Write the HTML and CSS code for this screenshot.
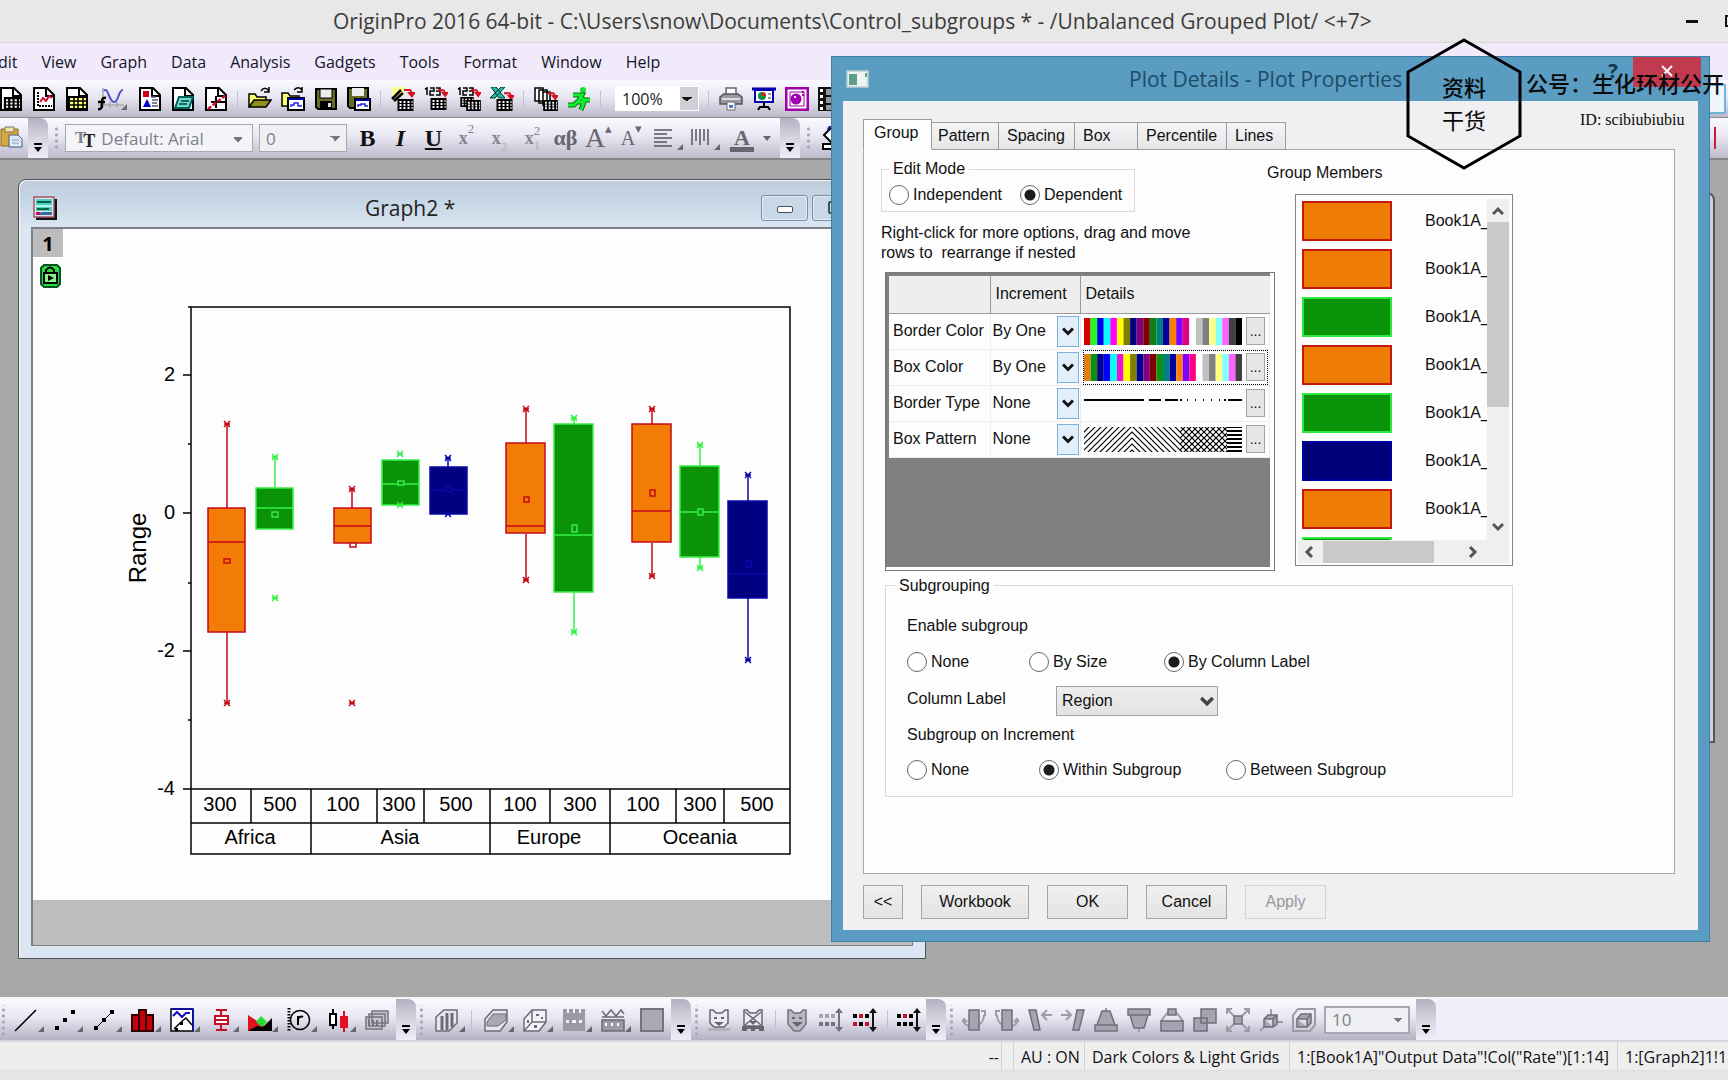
FILE: index.html
```
<!DOCTYPE html>
<html lang="en">
<head>
    <meta charset="UTF-8">
    <meta name="viewport" content="width=device-width, initial-scale=1.0">
    <title>OriginPro 2016 64-bit</title>
    <link rel="stylesheet" href="styles.css">
</head>
<body>
    <!-- icon set -->
    <svg class="sprite" aria-hidden="true">
        <symbol id="doc" viewBox="0 0 24 24"><path d="M2 1h13l7 7v15H2z" fill="#fff" stroke="#000" stroke-width="2"/><path d="M14 1v8h8" fill="none" stroke="#000" stroke-width="2"/></symbol>
        <symbol id="grid" viewBox="0 0 16 12"><path d="M0 0h16v12H0z" fill="#000"/><path d="M2 2h2v2H2zM6 2h2v2H6zM10 2h2v2h-2zM14 2h1v2h-1zM2 5h2v2H2zM6 5h2v2H6zM10 5h2v2h-2zM14 5h1v2h-1zM2 8h2v2H2zM6 8h2v2H6zM10 8h2v2h-2zM14 8h1v2h-1z" fill="#fff"/></symbol>
        <symbol id="i-book" viewBox="0 0 24 24"><use href="#doc"/><use href="#grid" x="4" y="10" width="19" height="13"/></symbol>
        <symbol id="i-graph" viewBox="0 0 24 24"><use href="#doc"/><path d="M6 5v14h14" fill="none" stroke="#000" stroke-width="2" stroke-dasharray="2 1"/><path d="M8 15l3-4 3 3 3-5 3 2" fill="none" stroke="#d01030" stroke-width="2"/></symbol>
        <symbol id="i-matrix" viewBox="0 0 24 24"><use href="#doc"/><path d="M4 10h18v12H4z" fill="#ffff70" stroke="#000" stroke-width="2"/><path d="M4 14h18M4 18h18M9 10v12M13 10v12M18 10v12" stroke="#000" stroke-width="1.5"/></symbol>
        <symbol id="i-func" viewBox="0 0 30 24"><path d="M5 1v20M0 18h26M12 15v6M19 15v6" stroke="#aaa" stroke-width="1.5" fill="none"/><path d="M6 4c4-5 5 11 10 11s4-12 9-12" fill="none" stroke="#5050d0" stroke-width="2"/><path d="M8 11c-4-1-4 2-4 5s0 7-4 6M0 15h7" fill="none" stroke="#000" stroke-width="2.5"/><path d="M29 17v6h-6z" fill="#667"/></symbol>
        <symbol id="i-layout" viewBox="0 0 24 24"><use href="#doc"/><path d="M5 4h6v6H5z" fill="#d00010"/><path d="M5 20l4-8 4 8z" fill="#0000d0"/><path d="M14 13h6M14 16h5M14 19h6M13 10h5" stroke="#557" stroke-width="1.5"/></symbol>
        <symbol id="i-notes" viewBox="0 0 24 24"><use href="#doc"/><path d="M8 10h14l-4 11H4z" fill="#6fe0c8" stroke="#006060" stroke-width="2"/><path d="M10 14h8M8 17h8" stroke="#004040" stroke-width="1.5"/></symbol>
        <symbol id="i-fit" viewBox="0 0 24 24"><use href="#doc"/><path d="M12 9v12M7 15h14" stroke="#000" stroke-width="2"/><path d="M4 22L22 8" stroke="#d01030" stroke-width="2.5" stroke-dasharray="4 2"/></symbol>
        <symbol id="i-open" viewBox="0 0 24 24"><path d="M1 19V7h6l2 3h9v9z" fill="#ffff70" stroke="#000" stroke-width="1.5"/><path d="M1 20l5-7h17l-5 7z" fill="#909020" stroke="#000" stroke-width="1.5"/><path d="M13 4c3-4 6-3 8 0M21 0v5h-5" fill="none" stroke="#000" stroke-width="1.5"/></symbol>
        <symbol id="i-opent" viewBox="0 0 24 24"><path d="M1 19V6h6l2 3h9v10z" fill="#ffff70" stroke="#000" stroke-width="1.5"/><path d="M13 3c3-3 6-3 8 0M21 0v5h-5" fill="none" stroke="#000" stroke-width="1.5"/><path d="M7 11h16v12H7z" fill="#fff" stroke="#000" stroke-width="2"/><path d="M7 12h16" stroke="#0000a0" stroke-width="2"/><path d="M10 20v-2h3v-2h4v3h4" fill="none" stroke="#2020f0" stroke-width="1.5"/></symbol>
        <symbol id="i-save" viewBox="0 0 24 24"><path d="M2 2h20v20H4l-2-2z" fill="#6b6b28" stroke="#000" stroke-width="2"/><path d="M6 2h12v9H6z" fill="#eee" stroke="#000"/><path d="M6 14h12v8H6z" fill="#000"/><path d="M14 16h3v4h-3z" fill="#ddd"/></symbol>
        <symbol id="i-savet" viewBox="0 0 24 24"><path d="M1 1h20v20H3l-2-2z" fill="#6b6b28" stroke="#000" stroke-width="2"/><path d="M5 1h12v8H5z" fill="#eee"/><path d="M8 12h15v11H8z" fill="#fff" stroke="#000" stroke-width="2"/><path d="M8 13h15" stroke="#0000a0" stroke-width="2"/><path d="M11 20v-2h3v-1h4v2h3" fill="none" stroke="#2020f0" stroke-width="1.5"/></symbol>
        <symbol id="arrow-in" viewBox="0 0 12 10"><path d="M0 2h6l2 3" fill="none" stroke="#d81020" stroke-width="2"/><path d="M3 4h9L8 10z" fill="#d81020"/></symbol>
        <symbol id="i-wiz" viewBox="0 0 24 24"><path d="M1 0h12v9H1z" fill="#ffff90"/><path d="M1 12L10 3M3 14l9-8" stroke="#000" stroke-width="2.5"/><use href="#arrow-in" x="13" y="1" width="12" height="10"/><use href="#grid" x="5" y="12" width="19" height="12"/></symbol>
        <symbol id="i-imp1" viewBox="0 0 24 24"><path d="M1 2l2-1v7M6 1h4v3H6v4h4M12 1h4v7h-4M12 4h4" fill="none" stroke="#000" stroke-width="1.5"/><use href="#arrow-in" x="14" y="1" width="11" height="10"/><use href="#grid" x="5" y="11" width="19" height="12"/></symbol>
        <symbol id="i-impn" viewBox="0 0 24 24"><path d="M1 2l2-1v7M6 1h4v3H6v4h4M12 1h4v7h-4M12 4h4" fill="none" stroke="#000" stroke-width="1.5"/><use href="#arrow-in" x="14" y="1" width="11" height="10"/><use href="#grid" x="2" y="10" width="16" height="10"/><use href="#grid" x="9" y="13" width="15" height="11"/></symbol>
        <symbol id="i-xls" viewBox="0 0 24 24"><path d="M1 0h5l9 11H9zM11 0h4L5 11H0z" fill="#20b8a8" stroke="#003838"/><use href="#arrow-in" x="14" y="4" width="11" height="10"/><use href="#grid" x="5" y="12" width="19" height="12"/></symbol>
        <symbol id="i-batch" viewBox="0 0 24 24"><path d="M1 1h8v13H1zM5 3h8v13H5zM9 5h7v13H9z" fill="#fff" stroke="#000" stroke-width="1.5"/><use href="#arrow-in" x="14" y="4" width="11" height="10"/><use href="#grid" x="9" y="13" width="15" height="11"/></symbol>
        <symbol id="i-run" viewBox="0 0 24 24"><circle cx="16" cy="3" r="3" fill="#10e030"/><path d="M6 8h9l-4 7h6l-3 8M11 14l-4 4H1M13 9l4 4h6" fill="none" stroke="#087018" stroke-width="5"/><path d="M6 8h9l-4 7h6l-3 8M11 14l-4 4H1M13 9l4 4h6" fill="none" stroke="#10ee30" stroke-width="3"/></symbol>
        <symbol id="i-print" viewBox="0 0 24 24"><path d="M7 9V1h10v8" fill="#fff" stroke="#667" stroke-width="1.5"/><path d="M1 10l4-3h14l4 3v7H1z" fill="#999aa4" stroke="#555" stroke-width="1.5"/><path d="M3 12h18" stroke="#ddd" stroke-width="2"/><path d="M8 15h8v8H8z" fill="#fff" stroke="#667"/><path d="M10 18h4v3h-4z" fill="#4080c0"/></symbol>
        <symbol id="i-slide" viewBox="0 0 24 24"><path d="M0 2h24" stroke="#0000b0" stroke-width="3"/><path d="M3 3h18v12H3z" fill="#fff" stroke="#0000b0" stroke-width="2"/><circle cx="10" cy="9" r="4" fill="#109040"/><path d="M10 9V5a4 4 0 014 4z" fill="#e02020"/><path d="M16 7h3M16 11h3" stroke="#333"/><path d="M12 15v5M6 23l2-3h8l2 3" stroke="#000" stroke-width="2" fill="none"/></symbol>
        <symbol id="i-cam" viewBox="0 0 24 24"><path d="M1 1h22v22H1z" fill="#fff" stroke="#a000a8" stroke-width="3"/><path d="M5 5h14v14H5z" fill="none" stroke="#a000a8"/><circle cx="11" cy="12" r="5.500" fill="#a000b0"/><path d="M9 9h2v2H9z" fill="#fff"/><path d="M18 4v6" stroke="#a000a8" stroke-width="2" stroke-dasharray="2 1"/></symbol>
        <symbol id="i-film" viewBox="0 0 24 24"><path d="M0 0h24v24H0z" fill="#111"/><path d="M2 2h3v3H2zM2 8h3v3H2zM2 14h3v3H2zM2 20h3v3H2z" fill="#fff"/><path d="M8 2h14v6H8zM8 10h14v6H8zM8 18h14v5H8z" fill="#999"/></symbol>
        <symbol id="i-paste" viewBox="0 0 24 24"><path d="M1 3h17v17H1z" fill="#d9a93c" stroke="#8a6a20"/><path d="M5 1h9v5H5z" fill="#f3e6a0" stroke="#777"/><path d="M9 9h9l4 4v8H9z" fill="#dfeaf6" stroke="#445a80"/><path d="M12 14h7M12 17h7" stroke="#7f9cc8"/></symbol>
        <symbol id="i-align" viewBox="0 0 24 24"><path d="M1 4h18M1 8h13M1 12h18M1 16h13M1 20h18" stroke="#555560" stroke-width="1.500"/></symbol>
        <symbol id="i-bars" viewBox="0 0 24 24"><path d="M2 3v16M6 3v12M10 3v16M14 3v12M18 3v16" stroke="#555560" stroke-width="1.500"/></symbol>
        <symbol id="i-fill" viewBox="0 0 24 24"><path d="M2 9l7-7 7 7-7 7z" fill="#fff" stroke="#000" stroke-width="2"/><path d="M6 5c0-6 6-6 6-1v4" fill="none" stroke="#202080" stroke-width="2"/><path d="M1 18h22v5H1z" fill="#fff" stroke="#000" stroke-width="2"/></symbol>
        <symbol id="i-line" viewBox="0 0 24 24"><path d="M1 23L22 2" stroke="#000" stroke-width="1.500"/></symbol>
        <symbol id="i-dots" viewBox="0 0 24 24"><path d="M2 18h4v4H2zM10 10h4v4h-4zM18 2h4v4h-4z"/></symbol>
        <symbol id="i-ldots" viewBox="0 0 24 24"><path d="M4 20L20 4" stroke="#000"/><path d="M2 18h4v4H2zM10 10h4v4h-4zM18 2h4v4h-4z"/></symbol>
        <symbol id="i-col" viewBox="0 0 24 24"><path d="M1 7h7v16H1zM8 2h7v21H8zM15 7h7v16h-7z" fill="#c40010" stroke="#300" stroke-width="2"/></symbol>
        <symbol id="i-multi" viewBox="0 0 24 24"><path d="M1 1h22v22H1z" fill="#fff" stroke="#000" stroke-width="1.500"/><path d="M3 8l4-4 5 5 4-4h4" fill="none" stroke="#1010c0" stroke-width="2"/><path d="M4 21l6-6 6-5 6 7" fill="none" stroke="#000" stroke-width="1.500"/><path d="M5 20h3v3H5zM10 14h3v3h-3z"/><path d="M23 1v22M1 1h22" stroke="#1010a0" stroke-width="2"/></symbol>
        <symbol id="i-box" viewBox="0 0 24 24"><path d="M7 2h11M12 2v21M7 22h11" stroke="#c41020" stroke-width="2"/><path d="M6 8h13v8H6z" fill="#fff" stroke="#c41020" stroke-width="2"/><path d="M6 12h13" stroke="#c41020" stroke-width="2"/></symbol>
        <symbol id="i-area" viewBox="0 0 24 24"><path d="M0 7l24 16H0z" fill="#e01020"/><path d="M8 14l5-6 6 6-5 5z" fill="#20e030"/><path d="M0 23l9-5 6 1 9-9v13z"/></symbol>
        <symbol id="i-polar" viewBox="0 0 24 24"><path d="M2 0v23" stroke="#000" stroke-width="3" stroke-dasharray="1.500 1.500"/><circle cx="13" cy="12" r="9.500" fill="none" stroke="#000" stroke-width="1.500"/><path d="M11 17V8M11 11c1-2 3-3 5-2" fill="none" stroke="#000" stroke-width="2"/></symbol>
        <symbol id="i-stock" viewBox="0 0 24 24"><path d="M7 1v20" stroke="#000" stroke-width="2"/><path d="M4 6h6v11H4z" fill="#fff" stroke="#000" stroke-width="2"/><path d="M18 3v21" stroke="#d01020" stroke-width="2"/><path d="M14 8h8v12h-8z" fill="#e01020"/></symbol>
        <symbol id="i-stack" viewBox="0 0 24 24"><path d="M7 3h16v12H7zM4 6h16v12H4zM1 9h16v12H1z" fill="#c6c6d0" stroke="#74747f" stroke-width="1.500"/><path d="M4 12v6M8 12v6M12 12v6" stroke="#74747f" stroke-width="2"/></symbol>
        <symbol id="i-3dbar" viewBox="0 0 24 24"><path d="M1 23V9l8-7h13v13l-8 8z" fill="#e6e6ee" stroke="#6c6c78" stroke-width="1.500"/><path d="M7 8v14M12 5v17M17 5v14" stroke="#6c6c78" stroke-width="3"/></symbol>
        <symbol id="i-3dsurf" viewBox="0 0 24 24"><path d="M1 23V11l8-9h14v12l-7 9z" fill="#e6e6ee" stroke="#6c6c78" stroke-width="1.500"/><path d="M3 14l6-8h13v6l-8 6H3z" fill="#a9a9b6" stroke="#6c6c78"/></symbol>
        <symbol id="i-3dsc" viewBox="0 0 24 24"><path d="M1 23V11l8-9h14v12l-7 9zM9 2v12l-8 9M9 14h14" fill="#f2f2f8" stroke="#6c6c78" stroke-width="1.500"/><path d="M4 12h2v3H4zM13 6h3v2h-3zM18 9h2v2h-2zM11 17h3v3h-3z" fill="#6c6c78"/></symbol>
        <symbol id="i-heat" viewBox="0 0 24 24"><path d="M1 1h22v22H1z" fill="#9a9aa6"/><path d="M5 1h2v4H5zM11 1h2v4h-2zM17 1h2v4h-2zM4 12h3v3H4zM10 12h4v3h-4zM17 12h3v3h-3z" fill="#f4f4fa"/></symbol>
        <symbol id="i-wave" viewBox="0 0 24 24"><path d="M1 3l4 5 5-6 5 6 5-6 3 4M1 9h22" fill="none" stroke="#6c6c78" stroke-width="1.500"/><path d="M1 12h22v11H1z" fill="#9a9aa6" stroke="#6c6c78" stroke-width="1.500"/><path d="M4 15h2v3H4zM10 15h2v3h-2zM16 15h2v3h-2z" fill="#fff"/></symbol>
        <symbol id="i-img" viewBox="0 0 24 24"><path d="M1 1h22v22H1z" fill="#abaab3" stroke="#74747f" stroke-width="2"/></symbol>
        <symbol id="i-mask" viewBox="0 0 24 24"><path d="M1 20h22v3H1z" fill="#b2b2be"/><path d="M3 2h3l3 3h6l3-3h3v13l-4 4H7l-4-4z" fill="#ececf3" stroke="#666672" stroke-width="1.500"/><path d="M7 9h3v2H7zM14 9h3v2h-3zM7 14h10l-5 4z" fill="#666672"/></symbol>
        <symbol id="i-unmask" viewBox="0 0 24 24"><path d="M3 2h3l3 3h6l3-3h3v16H3z" fill="#ececf3" stroke="#666672" stroke-width="1.500"/><path d="M4 4l16 13M20 4L4 17" stroke="#666672" stroke-width="1.500"/><path d="M8 13h8l-4 4zM1 18h22v3H1zM1 21h5v2H1zM10 21h4v2h-4zM18 21h5v2h-5z" fill="#666672"/></symbol>
        <symbol id="i-mask2" viewBox="0 0 24 24"><path d="M3 2h3l3 3h6l3-3h3v14l-6 7H9l-6-7z" fill="#b8b8c4" stroke="#74747f" stroke-width="1.500"/><path d="M7 9h3v2H7zM14 9h3v2h-3zM7 14h11l-6 5z" fill="#666672"/></symbol>
        <symbol id="updown" viewBox="0 0 8 24"><path d="M4 3v18" stroke="currentColor" stroke-width="2"/><path d="M4 0l4 5H0zM4 24l4-5H0z" fill="currentColor"/></symbol>
        <symbol id="i-sw1" viewBox="0 0 24 24"><path d="M0 6h4v4H0zM6 6h4v4H6zM12 6h4v4h-4z" fill="#a5a5b0"/><path d="M0 14h4v4H0zM6 14h4v4H6zM12 14h4v4h-4z" fill="#72727e"/><use href="#updown" x="16" width="8" height="24" color="#72727e"/></symbol>
        <symbol id="i-sw2" viewBox="0 0 24 24"><path d="M0 6h4v4H0zM12 6h4v4h-4zM6 14h4v4H6z"/><path d="M6 6h4v4H6zM0 14h4v4H0zM12 14h4v4h-4z" fill="#c8102e"/><use href="#updown" x="16" width="8" height="24"/></symbol>
        <symbol id="i-sw3" viewBox="0 0 24 24"><path d="M0 6h4v4H0zM12 6h4v4h-4zM0 14h4v4H0zM6 14h4v4H6zM12 14h4v4h-4z"/><path d="M6 6h4v4H6z" fill="#c8102e"/><use href="#updown" x="16" width="8" height="24"/></symbol>
        <symbol id="i-rotl" viewBox="0 0 24 24"><path d="M2 13c0 8 20 8 20-6M0 14l2-3 3 3M19 3h4v5" class="l"/><path d="M7 2h10v20H7z" class="g"/></symbol>
        <symbol id="i-rotr" viewBox="0 0 24 24"><path d="M22 13c0 8-20 8-20-6M24 14l-2-3-3 3M5 3H1v5" class="l"/><path d="M7 2h10v20H7z" class="g"/></symbol>
        <symbol id="i-tiltl" viewBox="0 0 24 24"><path d="M1 2h7l4 20H6z" class="g"/><path d="M24 7h-9M19 2l-5 5 5 5" class="l"/></symbol>
        <symbol id="i-tiltr" viewBox="0 0 24 24"><path d="M23 2h-7l-4 20h6z" class="g"/><path d="M0 7h9M5 2l5 5-5 5" class="l"/></symbol>
        <symbol id="i-trap" viewBox="0 0 24 24"><path d="M12 0v4" class="l"/><path d="M8 3h8l5 14H3zM1 17h22v6H1z" class="g"/></symbol>
        <symbol id="i-trapd" viewBox="0 0 24 24"><path d="M12 24v-4" class="l"/><path d="M3 7h18l-4 13H7zM1 1h22v6H1z" class="g"/></symbol>
        <symbol id="i-persp" viewBox="0 0 24 24"><path d="M1 13L8 4M23 13l-7-9" class="l"/><path d="M8 1h8v6H8zM1 13h22v10H1z" class="g"/></symbol>
        <symbol id="i-two" viewBox="0 0 24 24"><path d="M8 1h15v14H8zM1 10h13v13H1z" class="g"/></symbol>
        <symbol id="i-fitall" viewBox="0 0 24 24"><path d="M1 1l7 7M23 1l-7 7M1 23l7-7M23 23l-7-7M1 6V1h5M18 1h5v5M1 18v5h5M18 23h5v-5" class="l"/><path d="M8 8h8v8H8z" class="g"/></symbol>
        <symbol id="i-axes" viewBox="0 0 24 24"><path d="M12 7V1M5 19l-4 4M18 14h6" class="l"/><path d="M5 11l4-4h9v9l-4 3H5zM14 19v-8H5M14 11l4-4" class="g"/></symbol>
        <symbol id="i-cube" viewBox="0 0 24 24"><path d="M1 23V7l5-6h17v16l-5 6z" class="l"/><path d="M5 11l4-5h10v9l-4 4H5zM15 19v-8H5M15 11l4-5" class="g"/></symbol>
        <symbol id="chev" viewBox="0 0 12 10"><path d="M1 2l5 5 5-5" fill="none" stroke="currentColor" stroke-width="3"/></symbol>
        <symbol id="mark" viewBox="-4 -4 8 8"><path d="M-3-3l6 6M3-3l-6 6M-3 0h6" fill="none" stroke="currentColor" stroke-width="1.500"/></symbol>
    </svg>

    <header class="titlebar">
        <h1>OriginPro 2016 64-bit - C:\Users\snow\Documents\Control_subgroups * - /Unbalanced Grouped Plot/ &lt;+7&gt;</h1>
        <div class="titlebar__buttons">
            <button class="win-btn" aria-label="Minimize"><span class="win-btn__min"></span></button>
            <button class="win-btn" aria-label="Maximize"><span class="win-btn__max"></span></button>
        </div>
    </header>

    <nav class="menubar">
        <a href="#">Edit</a><a href="#">View</a><a href="#">Graph</a><a href="#">Data</a><a href="#">Analysis</a><a href="#">Gadgets</a><a href="#">Tools</a><a href="#">Format</a><a href="#">Window</a><a href="#">Help</a>
    </nav>

    <div class="toolbar toolbar--standard">
        <button class="tool" aria-label="New workbook"><svg><use href="#i-book"/></svg></button>
        <button class="tool" aria-label="New graph"><svg><use href="#i-graph"/></svg></button>
        <button class="tool" aria-label="New matrix"><svg><use href="#i-matrix"/></svg></button>
        <button class="tool tool--wide" aria-label="New function"><svg><use href="#i-func"/></svg></button>
        <button class="tool" aria-label="New layout"><svg><use href="#i-layout"/></svg></button>
        <button class="tool" aria-label="New notes"><svg><use href="#i-notes"/></svg></button>
        <button class="tool" aria-label="Digitizer"><svg><use href="#i-fit"/></svg></button>
        <span class="sep"></span>
        <button class="tool" aria-label="Open"><svg><use href="#i-open"/></svg></button>
        <button class="tool" aria-label="Open template"><svg><use href="#i-opent"/></svg></button>
        <button class="tool" aria-label="Save"><svg><use href="#i-save"/></svg></button>
        <button class="tool" aria-label="Save template"><svg><use href="#i-savet"/></svg></button>
        <span class="sep"></span>
        <button class="tool" aria-label="Import wizard"><svg><use href="#i-wiz"/></svg></button>
        <button class="tool" aria-label="Import ASCII"><svg><use href="#i-imp1"/></svg></button>
        <button class="tool" aria-label="Import multiple ASCII"><svg><use href="#i-impn"/></svg></button>
        <button class="tool" aria-label="Import Excel"><svg><use href="#i-xls"/></svg></button>
        <span class="sep"></span>
        <button class="tool" aria-label="Batch"><svg><use href="#i-batch"/></svg></button>
        <button class="tool" aria-label="Recalculate"><svg><use href="#i-run"/></svg></button>
        <span class="sep"></span>
        <select class="combo combo--zoom" aria-label="Zoom"><option>100%</option></select>
        <span class="sep"></span>
        <button class="tool" aria-label="Print"><svg><use href="#i-print"/></svg></button>
        <button class="tool" aria-label="Slide show"><svg><use href="#i-slide"/></svg></button>
        <button class="tool" aria-label="Snapshot"><svg><use href="#i-cam"/></svg></button>
        <button class="tool" aria-label="Video"><svg><use href="#i-film"/></svg></button>
        <span class="tool-end"></span>
    </div>

    <div class="toolbar toolbar--format">
        <button class="tool tool--paste" aria-label="Paste"><svg><use href="#i-paste"/></svg></button>
        <span class="overflow"></span>
        <span class="grip"></span>
        <label class="font-box"><span class="font-box__t1">T</span><span class="font-box__t2">T</span>
            <select class="combo combo--font" aria-label="Font"><option>Default: Arial</option></select></label>
        <select class="combo combo--size" aria-label="Font size"><option>0</option></select>
        <button class="tool tool--text"><b>B</b></button>
        <button class="tool tool--text"><b><i>I</i></b></button>
        <button class="tool tool--text"><b><u>U</u></b></button>
        <button class="tool tool--text tool--dim"><b>x</b><sup>2</sup></button>
        <button class="tool tool--text tool--dim"><b>x</b><sub>2</sub></button>
        <button class="tool tool--text tool--dim"><b>x</b><span class="pair"><span>2</span><span>1</span></span></button>
        <button class="tool tool--text tool--greek">αβ</button>
        <button class="tool tool--text tool--big">A<sup>▴</sup></button>
        <button class="tool tool--text tool--small">A<sup>▾</sup></button>
        <button class="tool tool--menu" aria-label="Align"><svg><use href="#i-align"/></svg></button>
        <button class="tool tool--menu" aria-label="Distribute"><svg><use href="#i-bars"/></svg></button>
        <button class="tool tool--text tool--color">A</button>
        <span class="caret"></span>
        <span class="overflow"></span>
        <span class="grip"></span>
        <button class="tool" aria-label="Fill colour"><svg><use href="#i-fill"/></svg></button>
        <span class="tool-bar"></span>
    </div>

    <main class="workspace">
        <div class="back-window"></div>
        <section class="graph-window">
            <div class="graph-window__title">
                <svg class="graph-window__icon" viewBox="0 0 24 24"><path d="M3 3h21v21H3z" fill="#111"/><path d="M1 1h20v20H1z" fill="#e6dfe4" stroke="#a05868" stroke-width="1.500"/><path d="M3 3h16v12H3z" fill="#4fd0c4"/><path d="M4 6h14M4 13h12" stroke="#064" stroke-width="2"/><path d="M3 10h16" stroke="#dff" stroke-width="1.500"/><path d="M3 18l6-2h10v3H3z" fill="#2a6fa0"/><path d="M3 16h4v3H3z" fill="#c01060"/></svg>
                <h2>Graph2 *</h2>
                <div class="graph-window__buttons">
                    <button aria-label="Minimize graph"><span class="glyph-min"></span></button>
                    <button aria-label="Maximize graph"><span class="glyph-max"></span></button>
                </div>
            </div>
            <div class="graph-window__page">
                <svg class="chart" viewBox="33 229 879 671" role="img" aria-label="Box plot of Range by region">
                    <rect x="33" y="229" width="30" height="28" fill="#bdbcbd"/>
                    <text class="layer-no" x="48" y="251">1</text>
                    <path d="M41 268l3-3h13l3 3v16l-3 3H44l-3-3z" fill="#30d840" stroke="#052" stroke-width="2"/>
                    <path d="M46 273v-3q4-5 8 0v3" fill="none" stroke="#000" stroke-width="2"/>
                    <path d="M44 273h13v10H44z" fill="#8af08a" stroke="#000" stroke-width="2"/>
                    <path d="M48 275l6 3-6 3z"/>
                    <g class="axis">
                        <path d="M191 307H790V854H191zM191 789H790M191 823H790M251 789v34M311 789v65M377 789v34M424 789v34M490 789v65M550 789v34M610 789v65M676 789v34M724 789v34"/>
                        <path d="M188 307h3M183 375h8M188 444h3M183 513h8M188 583h3M183 651h8M188 720h3M183 789h8"/>
                    </g>
                    <g class="tick-label">
                        <text x="175" y="381">2</text><text x="175" y="519">0</text><text x="175" y="657">-2</text><text x="175" y="795">-4</text>
                    </g>
                    <g class="cat-label">
                        <text x="220" y="811">300</text><text x="280" y="811">500</text><text x="343" y="811">100</text><text x="399" y="811">300</text><text x="456" y="811">500</text><text x="520" y="811">100</text><text x="580" y="811">300</text><text x="643" y="811">100</text><text x="700" y="811">300</text><text x="757" y="811">500</text>
                        <text x="250" y="844">Africa</text><text x="400" y="844">Asia</text><text x="549" y="844">Europe</text><text x="700" y="844">Oceania</text>
                    </g>
                    <text class="axis-title" transform="translate(146 548) rotate(-90)">Range</text>
                    <g class="box box--100">
                        <path d="M227 424V508M227 632V703M352 489V508M526 409V443M526 534V580M652 409V424M652 543V576"/>
                        <rect x="208" y="508" width="37" height="124"/><path d="M208 542h37"/><rect x="224" y="559" width="6" height="4"/>
                        <rect x="334" y="508" width="37" height="35"/><path d="M334 526h37"/><rect class="hollow" x="350" y="543" width="6" height="4"/>
                        <rect x="506" y="443" width="39" height="90"/><path d="M506 526h39"/><rect x="524" y="497" width="5" height="5"/>
                        <rect x="632" y="424" width="39" height="118"/><path d="M632 511h39"/><rect x="650" y="490" width="5" height="6"/>
                        <use href="#mark" x="223" y="420" width="8" height="8"/><use href="#mark" x="223" y="699" width="8" height="8"/><use href="#mark" x="348" y="485" width="8" height="8"/><use href="#mark" x="348" y="699" width="8" height="8"/><use href="#mark" x="522" y="405" width="8" height="8"/><use href="#mark" x="522" y="576" width="8" height="8"/><use href="#mark" x="648" y="405" width="8" height="8"/><use href="#mark" x="648" y="572" width="8" height="8"/>
                    </g>
                    <g class="box box--300">
                        <path d="M275 457V488M574 418V424M574 592V632M700 445V466M700 557V568"/>
                        <rect x="256" y="488" width="37" height="41"/><path d="M256 508h37"/><rect x="272" y="512" width="6" height="5"/>
                        <rect x="382" y="460" width="37" height="45"/><path d="M382 484h37"/><rect x="398" y="481" width="6" height="4"/>
                        <rect x="554" y="424" width="39" height="168"/><path d="M554 535h39"/><rect x="572" y="525" width="5" height="7"/>
                        <rect x="680" y="466" width="39" height="91"/><path d="M680 512h39"/><rect x="698" y="509" width="5" height="6"/>
                        <use href="#mark" x="271" y="453" width="8" height="8"/><use href="#mark" x="271" y="594" width="8" height="8"/><use href="#mark" x="396" y="450" width="8" height="8"/><use href="#mark" x="396" y="501" width="8" height="8"/><use href="#mark" x="570" y="414" width="8" height="8"/><use href="#mark" x="570" y="628" width="8" height="8"/><use href="#mark" x="696" y="441" width="8" height="8"/><use href="#mark" x="696" y="564" width="8" height="8"/>
                    </g>
                    <g class="box box--500">
                        <path d="M448 458V467M748 475V501M748 598V660"/>
                        <rect x="430" y="467" width="37" height="47"/><path d="M430 490h37"/><rect x="446" y="487" width="5" height="5"/>
                        <rect x="728" y="501" width="39" height="97"/><path d="M728 574h39"/><rect x="746" y="561" width="5" height="6"/>
                        <use href="#mark" x="444" y="454" width="8" height="8"/><use href="#mark" x="444" y="510" width="8" height="8"/><use href="#mark" x="744" y="471" width="8" height="8"/><use href="#mark" x="744" y="656" width="8" height="8"/>
                    </g>
                </svg>
            </div>
        </section>
    </main>

    <div class="toolbar toolbar--plot">
        <span class="grip"></span>
        <button class="tool tool--menu" aria-label="Line"><svg><use href="#i-line"/></svg></button>
        <button class="tool tool--menu" aria-label="Scatter"><svg><use href="#i-dots"/></svg></button>
        <button class="tool tool--menu" aria-label="Line and symbol"><svg><use href="#i-ldots"/></svg></button>
        <button class="tool tool--menu" aria-label="Column"><svg><use href="#i-col"/></svg></button>
        <button class="tool tool--menu" aria-label="Multi panel"><svg><use href="#i-multi"/></svg></button>
        <button class="tool tool--menu" aria-label="Box chart"><svg><use href="#i-box"/></svg></button>
        <button class="tool tool--menu" aria-label="Area"><svg><use href="#i-area"/></svg></button>
        <button class="tool tool--menu" aria-label="Polar"><svg><use href="#i-polar"/></svg></button>
        <button class="tool tool--menu" aria-label="Stock"><svg><use href="#i-stock"/></svg></button>
        <button class="tool tool--last" aria-label="Templates"><svg><use href="#i-stack"/></svg></button>
        <span class="overflow"></span><span class="grip"></span>
        <button class="tool tool--menu" aria-label="3D bars"><svg><use href="#i-3dbar"/></svg></button>
        <span class="sep"></span>
        <button class="tool tool--menu" aria-label="3D surface"><svg><use href="#i-3dsurf"/></svg></button>
        <button class="tool tool--menu" aria-label="3D scatter"><svg><use href="#i-3dsc"/></svg></button>
        <button class="tool tool--menu" aria-label="Heat map"><svg><use href="#i-heat"/></svg></button>
        <button class="tool tool--menu" aria-label="Profile"><svg><use href="#i-wave"/></svg></button>
        <button class="tool tool--last" aria-label="Image"><svg><use href="#i-img"/></svg></button>
        <span class="overflow"></span><span class="grip"></span>
        <button class="tool tool--mask" aria-label="Mask"><svg><use href="#i-mask"/></svg></button>
        <button class="tool tool--mask" aria-label="Unmask"><svg><use href="#i-unmask"/></svg></button>
        <span class="sep"></span>
        <button class="tool tool--mask" aria-label="Mask colour"><svg><use href="#i-mask2"/></svg></button>
        <button class="tool tool--mask" aria-label="Hide masked"><svg><use href="#i-sw1"/></svg></button>
        <button class="tool tool--mask" aria-label="Swap mask"><svg><use href="#i-sw2"/></svg></button>
        <span class="sep"></span>
        <button class="tool tool--mask" aria-label="Toggle mask"><svg><use href="#i-sw3"/></svg></button>
        <span class="overflow"></span><span class="grip"></span>
        <button class="tool" aria-label="Rotate left"><svg><use href="#i-rotl"/></svg></button>
        <button class="tool" aria-label="Rotate right"><svg><use href="#i-rotr"/></svg></button>
        <button class="tool" aria-label="Tilt left"><svg><use href="#i-tiltl"/></svg></button>
        <button class="tool" aria-label="Tilt right"><svg><use href="#i-tiltr"/></svg></button>
        <button class="tool" aria-label="Tilt up"><svg><use href="#i-trap"/></svg></button>
        <button class="tool" aria-label="Tilt down"><svg><use href="#i-trapd"/></svg></button>
        <button class="tool" aria-label="Increase perspective"><svg><use href="#i-persp"/></svg></button>
        <button class="tool" aria-label="Decrease perspective"><svg><use href="#i-two"/></svg></button>
        <button class="tool" aria-label="Fit to layer"><svg><use href="#i-fitall"/></svg></button>
        <button class="tool" aria-label="Reset rotation"><svg><use href="#i-axes"/></svg></button>
        <button class="tool" aria-label="Reset"><svg><use href="#i-cube"/></svg></button>
        <select class="combo combo--angle" aria-label="Angle"><option>10</option></select>
        <span class="overflow"></span>
    </div>

    <footer class="statusbar">
        <span class="statusbar__idle">--</span>
        <span class="statusbar__gap"></span>
        <span class="statusbar__au">AU : ON</span>
        <span class="statusbar__theme">Dark Colors &amp; Light Grids</span>
        <span class="statusbar__data">1:[Book1A]"Output Data"!Col("Rate")[1:14]</span>
        <span class="statusbar__graph">1:[Graph2]1!1</span>
    </footer>

    <section class="dialog" role="dialog" aria-labelledby="dlg-title">
        <div class="dialog__title">
            <svg class="dialog__icon" viewBox="0 0 23 18"><path d="M1 1h21v16H1z" fill="#eef4f2" stroke="#b9cdd2" stroke-width="1.500"/><path d="M3 4h8v11H3z" fill="#5fa08c"/><path d="M19 3h2v4h-2z" fill="#5fa08c"/></svg>
            <h2 id="dlg-title">Plot Details - Plot Properties</h2>
            <button class="dialog__help" aria-label="Help">?</button>
            <button class="dialog__close" aria-label="Close"><svg viewBox="0 0 12 12"><path d="M1 1l10 10M11 1L1 11" stroke="#fff" stroke-width="2"/></svg></button>
        </div>
        <div class="dialog__body">
            <div class="tabs">
                <button class="tab tab--active">Group</button><button class="tab tab--pattern">Pattern</button><button class="tab tab--spacing">Spacing</button><button class="tab tab--box">Box</button><button class="tab tab--percentile">Percentile</button><button class="tab tab--lines">Lines</button>
            </div>
            <div class="panel">
                <div class="panel__top">
                    <div class="panel__left">
                        <fieldset class="edit-mode">
                            <legend>Edit Mode</legend>
                            <label class="radio"><input type="radio" name="mode">Independent</label>
                            <label class="radio"><input type="radio" name="mode" checked>Dependent</label>
                        </fieldset>
                        <p class="hint">Right-click for more options, drag and move<br>rows to&nbsp; rearrange if nested</p>
                        <div class="increments">
                            <div class="increments__inner">
                            <table>
                                <thead><tr><th class="c1"></th><th class="c2">Increment</th><th>Details</th></tr></thead>
                                <tbody>
                                    <tr><td><label for="inc1">Border Color</label></td>
                                        <td><div class="drop"><select id="inc1"><option>By One</option></select><svg><use href="#chev"/></svg></div></td>
                                        <td><div class="detail"><svg class="swatches" viewBox="0 0 24 1" preserveAspectRatio="none"><path fill="#d40000" d="M0 0h1v1H0z"/><path fill="#1cff1c" d="M1 0h1v1H1z"/><path fill="#0000f0" d="M2 0h1v1H2z"/><path fill="#0ff" d="M3 0h1v1H3z"/><path fill="#f0f" d="M4 0h1v1H4z"/><path fill="#ff0" d="M5 0h1v1H5z"/><path fill="#808000" d="M6 0h1v1H6z"/><path fill="#000080" d="M7 0h1v1H7z"/><path fill="#800080" d="M8 0h1v1H8z"/><path fill="#800000" d="M9 0h1v1H9z"/><path fill="#108010" d="M10 0h1v1h-1z"/><path fill="#008080" d="M11 0h1v1h-1z"/><path fill="#0000a0" d="M12 0h1v1h-1z"/><path fill="#ff8000" d="M13 0h1v1h-1z"/><path fill="#8000ff" d="M14 0h1v1h-1z"/><path fill="#e00080" d="M15 0h1v1h-1z"/><path fill="#fff" d="M16 0h1v1h-1z"/><path fill="#c0c0c0" d="M17 0h1v1h-1z"/><path fill="#808080" d="M18 0h1v1h-1z"/><path fill="#ffff80" d="M19 0h1v1h-1z"/><path fill="#80ffff" d="M20 0h1v1h-1z"/><path fill="#ff60ff" d="M21 0h1v1h-1z"/><path fill="#404040" d="M22 0h1v1h-1z"/><path fill="#000" d="M23 0h1v1h-1z"/></svg><button aria-label="Border colour list">...</button></div></td></tr>
                                    <tr><td><label for="inc2">Box Color</label></td>
                                        <td><div class="drop"><select id="inc2"><option>By One</option></select><svg><use href="#chev"/></svg></div></td>
                                        <td><div class="detail detail--focus"><svg class="swatches" viewBox="0 0 24 1" preserveAspectRatio="none"><path fill="#e08010" d="M0 0h1v1H0z"/><path fill="#109010" d="M1 0h1v1H1z"/><path fill="#000090" d="M2 0h1v1H2z"/><path fill="#0000ff" d="M3 0h1v1H3z"/><path fill="#0ff" d="M4 0h1v1H4z"/><path fill="#f010d0" d="M5 0h1v1H5z"/><path fill="#ff0" d="M6 0h1v1H6z"/><path fill="#808000" d="M7 0h1v1H7z"/><path fill="#000090" d="M8 0h1v1H8z"/><path fill="#800080" d="M9 0h1v1H9z"/><path fill="#800000" d="M10 0h1v1h-1z"/><path fill="#109010" d="M11 0h1v1h-1z"/><path fill="#008080" d="M12 0h1v1h-1z"/><path fill="#0000a0" d="M13 0h1v1h-1z"/><path fill="#ff8010" d="M14 0h1v1h-1z"/><path fill="#8000ff" d="M15 0h1v1h-1z"/><path fill="#ff0080" d="M16 0h1v1h-1z"/><path fill="#fff" d="M17 0h1v1h-1z"/><path fill="#c0c0c0" d="M18 0h1v1h-1z"/><path fill="#808080" d="M19 0h1v1h-1z"/><path fill="#ffff80" d="M20 0h1v1h-1z"/><path fill="#80ffff" d="M21 0h1v1h-1z"/><path fill="#ff60ff" d="M22 0h1v1h-1z"/><path fill="#404040" d="M23 0h1v1h-1z"/></svg><button aria-label="Box colour list">...</button></div></td></tr>
                                    <tr><td><label for="inc3">Border Type</label></td>
                                        <td><div class="drop"><select id="inc3"><option>None</option></select><svg><use href="#chev"/></svg></div></td>
                                        <td><div class="detail"><svg class="swatches" viewBox="0 0 158 27"><path d="M0 10h60M65 10h12M81 10h13M96 10h2M103 10h1M111 10h1M119 10h1M127 10h1M135 10h1M140 10h2M144 10h14" stroke="#000" stroke-width="2"/></svg><button aria-label="Border type list">...</button></div></td></tr>
                                    <tr><td><label for="inc4">Box Pattern</label></td>
                                        <td><div class="drop"><select id="inc4"><option>None</option></select><svg><use href="#chev"/></svg></div></td>
                                        <td><div class="detail"><svg class="swatches" viewBox="0 0 158 27">
                                            <defs>
                                                <pattern id="p-up" width="6" height="6" patternUnits="userSpaceOnUse"><path d="M-1 7L7-1M-1 1l2-2M5 7l2-2" stroke="#000" stroke-width="1.2"/></pattern>
                                                <pattern id="p-dn" width="6" height="6" patternUnits="userSpaceOnUse"><path d="M-1-1l8 8M5-1l2 2M-1 5l2 2" stroke="#000" stroke-width="1.2"/></pattern>
                                                <pattern id="p-h" width="4" height="4" patternUnits="userSpaceOnUse"><path d="M0 1h4" stroke="#000" stroke-width="2"/></pattern>
                                            </defs>
                                            <path d="M0 1h48v25H0zM96 1h47v25H96z" fill="url(#p-up)"/><path d="M48 1h95v25H48z" fill="url(#p-dn)"/><path d="M143 1h15v25h-15z" fill="url(#p-h)"/></svg><button aria-label="Box pattern list">...</button></div></td></tr>
                                </tbody>
                            </table>
                            </div>
                        </div>
                    </div>
                    <div class="panel__right">
                        <h3>Group Members</h3>
                        <div class="members">
                            <ul>
                                <li><i class="chip chip--100"></i><span>Book1A_</span></li>
                                <li><i class="chip chip--100"></i><span>Book1A_</span></li>
                                <li><i class="chip chip--300"></i><span>Book1A_</span></li>
                                <li><i class="chip chip--100"></i><span>Book1A_</span></li>
                                <li><i class="chip chip--300"></i><span>Book1A_</span></li>
                                <li><i class="chip chip--500"></i><span>Book1A_</span></li>
                                <li><i class="chip chip--100"></i><span>Book1A_</span></li>
                                <li><i class="chip chip--300"></i></li>
                            </ul>
                            <div class="vbar"><svg class="up"><use href="#chev"/></svg><span></span><svg class="down"><use href="#chev"/></svg></div>
                            <div class="hbar"><svg class="left"><use href="#chev"/></svg><span></span><svg class="right"><use href="#chev"/></svg></div>
                        </div>
                    </div>
                </div>
                <fieldset class="subgrouping">
                    <legend>Subgrouping</legend>
                    <p>Enable subgroup</p>
                    <div class="radios radios--enable">
                        <label class="radio"><input type="radio" name="enable">None</label>
                        <label class="radio"><input type="radio" name="enable">By Size</label>
                        <label class="radio"><input type="radio" name="enable" checked>By Column Label</label>
                    </div>
                    <div class="column-label">
                        <label for="col">Column Label</label>
                        <div class="drop drop--region"><select id="col"><option>Region</option></select><svg><use href="#chev"/></svg></div>
                    </div>
                    <p>Subgroup on Increment</p>
                    <div class="radios radios--inc">
                        <label class="radio"><input type="radio" name="inc">None</label>
                        <label class="radio"><input type="radio" name="inc" checked>Within Subgroup</label>
                        <label class="radio"><input type="radio" name="inc">Between Subgroup</label>
                    </div>
                </fieldset>
            </div>
            <div class="actions">
                <button class="btn btn--fold">&lt;&lt;</button>
                <button class="btn btn--workbook">Workbook</button>
                <button class="btn">OK</button>
                <button class="btn">Cancel</button>
                <button class="btn" disabled>Apply</button>
            </div>
        </div>
    </section>

    <aside class="watermark">
        <div class="watermark__hex">
            <svg viewBox="0 0 116 132"><path d="M58 2l56 32v64l-56 32L2 98V34z" fill="none" stroke="#000" stroke-width="3"/></svg>
            <strong>资料</strong><span>干货</span>
        </div>
        <div class="watermark__text">
            <strong>公号：生化环材公开</strong>
            <span>ID: scibiubiubiu</span>
        </div>
    </aside>
</body>
</html>
```
FILE: styles.css
```
*, *::before, *::after {
    box-sizing: border-box;
}
body {
    margin: 0;
    height: 100vh;
    overflow: hidden;
    position: relative;
    display: flex;
    flex-direction: column;
    background: #e8e8e8;
    color: #111;
    font-family: "Open Sans", "Noto Sans", sans-serif;
    font-size: 16px;
}
h1, h2, h3, p, ul {
    margin: 0;
    padding: 0;
    font-weight: normal;
}
button, select, input {
    font: inherit;
    color: inherit;
}
button {
    padding: 0;
}
.sprite {
    position: absolute;
    width: 0;
    height: 0;
}
.g {
    fill: #a4a4b2;
    stroke: #6f6f7b;
    stroke-width: 1.5;
}
.l {
    fill: none;
    stroke: #9c9ca8;
    stroke-width: 2;
}

/* application title and menu */
.titlebar {
    flex: none;
    height: 43px;
    display: flex;
    align-items: center;
    padding-left: 333px;
    background: #e8e8e8;
    border-bottom: 1px solid #d8d6dc;
    white-space: nowrap;
}
.titlebar h1 {
    font-size: 21px;
    line-height: 28px;
    color: #3c3c3c;
}
.titlebar__buttons {
    margin-left: auto;
    margin-right: -17px;
    display: flex;
    gap: 17px;
}
.win-btn {
    width: 24px;
    height: 24px;
    border: 0;
    background: none;
    display: flex;
    align-items: center;
    justify-content: center;
}
.win-btn__min {
    width: 12px;
    height: 3px;
    background: #111;
}
.win-btn__max {
    width: 16px;
    height: 12px;
    border: 2px solid #111;
}
.menubar {
    flex: none;
    height: 37px;
    display: flex;
    align-items: center;
    gap: 24px;
    margin-left: -11px;
    background: #f0eafb;
}
.menubar a {
    color: #141428;
    text-decoration: none;
}

/* toolbars */
.toolbar {
    flex: none;
    display: flex;
    align-items: center;
    background: linear-gradient(#fbfaff, #e8e7f2 45%, #bdbaca);
    border-bottom: 1px solid #8b8b95;
}
.toolbar--standard {
    height: 38px;
    padding-right: 2px;
}
.toolbar--standard .tool:first-child {
    margin-left: -6px;
}
.toolbar--format {
    height: 42px;
    border-bottom: 2px solid #858589;
}
.tool {
    flex: none;
    width: 33px;
    height: 32px;
    border: 0;
    background: none;
    display: flex;
    align-items: center;
    justify-content: center;
    position: relative;
}
.tool svg {
    width: 24px;
    height: 24px;
}
.tool--wide {
    width: 40px;
}
.tool--wide svg {
    width: 30px;
}
.tool--paste {
    width: 28px;
    justify-content: flex-start;
}
.tool--menu, .tool--last {
    width: 39px;
}
.tool--menu::after {
    content: "";
    position: absolute;
    right: 2px;
    bottom: 4px;
    border-left: 6px solid transparent;
    border-bottom: 6px solid #66666f;
}
.sep {
    flex: none;
    width: 11px;
    height: 16px;
    border-left: 1px solid #c2c0ce;
    margin-left: 5px;
    margin-right: -5px;
}
.combo {
    flex: none;
    appearance: none;
    border-radius: 0;
    border: 2px solid #a8a7b0;
    color: #808088;
    background: #f2f1f5;
    padding: 0 8px;
    position: relative;
}
.combo--zoom {
    width: 84px;
    height: 25px;
    margin: 0 4px 0 9px;
    border: 1px solid #fff;
    padding: 0 6px;
    color: #222;
    font-size: 16px;
    background: linear-gradient(45deg, transparent 50%, #111 50%) 66px 10px / 5px 5px no-repeat, linear-gradient(-45deg, transparent 50%, #111 50%) 71px 10px / 5px 5px no-repeat, linear-gradient(to right, #fff 64px, #d0cfd6 64px);
}
.tool-end {
    margin-left: auto;
    width: 18px;
    height: 30px;
    border: 2px solid #6fb4dc;
    background: #eef5fb;
}
.tool-bar {
    margin-left: auto;
    margin-right: 12px;
    width: 2px;
    height: 22px;
    background: #c02040;
}
.overflow {
    flex: none;
    align-self: stretch;
    width: 20px;
    border-radius: 0 8px 0 0;
    background: linear-gradient(#b3b1c0, #d6d4e0 50%, #efedf8);
    display: flex;
    flex-direction: column;
    align-items: center;
    justify-content: flex-end;
    gap: 2px;
    padding-bottom: 6px;
}
.overflow::before {
    content: "";
    width: 8px;
    height: 2px;
    background: #000;
}
.overflow::after {
    content: "";
    border: 4px solid transparent;
    border-top: 5px solid #000;
    border-bottom: 0;
}
.grip {
    flex: none;
    width: 17px;
    height: 24px;
    background: radial-gradient(circle, #a5a4b2 1px, transparent 2px) 50% 0 / 5px 6px repeat-y;
}
.font-box {
    width: 188px;
    height: 28px;
    flex: none;
    display: flex;
    align-items: center;
    border: 1px solid #a8a7b0;
    background: #f4f3f8;
    font-family: "Liberation Serif", serif;
    font-weight: bold;
    padding-left: 9px;
    margin-right: 6px;
}
.font-box__t1 {
    color: #808088;
    font-size: 17px;
}
.font-box__t2 {
    color: #222;
    font-size: 18px;
    padding-top: 6px;
    margin-left: -3px;
}
.combo--font {
    width: 153px;
    border: 0;
    padding: 0 6px;
    font-family: "Open Sans", sans-serif;
    font-weight: normal;
    font-size: 17px;
    background: linear-gradient(45deg, transparent 50%, #77777f 50%) 138px 10px / 5px 5px no-repeat, linear-gradient(-45deg, transparent 50%, #77777f 50%) 143px 10px / 5px 5px no-repeat;
}
.combo--size {
    width: 88px;
    height: 28px;
    margin-right: 4px;
    padding: 0 6px;
    border-width: 1px;
    font-size: 17px;
    background: linear-gradient(45deg, transparent 50%, #77777f 50%) 70px 11px / 5px 5px no-repeat, linear-gradient(-45deg, transparent 50%, #77777f 50%) 75px 11px / 5px 5px no-repeat, #f0eff4;
}
.tool--text {
    font: 24px "Liberation Serif", serif;
    line-height: 28px;
}
.tool--text sup, .tool--text sub {
    font-size: 13px;
    line-height: 14px;
    align-self: flex-start;
}
.tool--text sub {
    align-self: flex-end;
    color: #b0b0ba;
}
.tool--dim {
    color: #85858f;
    font-size: 18px;
}
.pair {
    display: flex;
    flex-direction: column;
    font-size: 13px;
    line-height: 14px;
}
.pair span:last-child {
    color: #b0b0ba;
}
.tool--greek {
    color: #666670;
    font-weight: bold;
    font-size: 22px;
}
.tool--big, .tool--small, .tool--color {
    color: #666670;
    font-size: 28px;
}
.tool--small {
    font-size: 20px;
}
.toolbar--format .tool--menu {
    width: 37px;
    padding-right: 4px;
}
.tool--color {
    width: 40px;
    font-weight: bold;
    font-size: 22px;
}
.tool--color::after {
    content: "";
    position: absolute;
    left: 8px;
    right: 8px;
    bottom: 2px;
    height: 5px;
    background: #66666f;
}
.caret {
    width: 18px;
}
.caret::before {
    content: "";
    display: block;
    width: 8px;
    border: 4px solid transparent;
    border-top: 5px solid #66666f;
    border-bottom: 0;
    margin-left: 1px;
}
.toolbar--plot {
    height: 45px;
    border-top: 2px solid #f4f3f8;
    border-bottom: 2px solid #d6d4de;
    background: linear-gradient(to right, transparent 1436px, #efedfa 1436px), linear-gradient(#fbfaff, #e8e7f2 45%, #b5b2c4);
}
.toolbar--plot .tool {
    height: 39px;
}
.toolbar--plot .tool--mask {
    width: 34px;
}
.toolbar--plot .grip {
    width: 11px;
    background-position: 50% 8px;
    background-size: 5px 6px;
    height: 30px;
}
.toolbar--plot .grip:first-child {
    width: 6px;
}
.toolbar--plot .sep {
    width: 10px;
    height: 20px;
}
.toolbar--plot .tool--menu::after {
    bottom: 7px;
    right: 1px;
}
.combo--angle {
    width: 86px;
    height: 28px;
    margin: 0 6px 0 4px;
    padding: 0 6px;
    font-size: 17px;
    background: linear-gradient(45deg, transparent 50%, #77777f 50%) 68px 10px / 4px 5px no-repeat, linear-gradient(-45deg, transparent 50%, #77777f 50%) 72px 10px / 4px 5px no-repeat, #f0eff4;
}

/* status bar */
.statusbar {
    flex: none;
    height: 38px;
    padding-bottom: 10px;
    display: flex;
    white-space: nowrap;
    background: linear-gradient(#efeeef 28px, #dcdcdc 28px, #e6e6e6 30px);
    line-height: 30px;
}
.statusbar span {
    flex: none;
    border-right: 1px solid #d2d2d2;
    padding-left: 7px;
}
.statusbar .statusbar__idle {
    width: 1002px;
    text-align: right;
    padding-right: 2px;
}
.statusbar .statusbar__gap {
    width: 12px;
}
.statusbar .statusbar__au {
    width: 71px;
}
.statusbar .statusbar__theme {
    width: 205px;
}
.statusbar .statusbar__data {
    width: 328px;
}
.statusbar .statusbar__graph {
    border: 0;
}

/* document area */
.workspace {
    flex: 1;
    position: relative;
    background: #a9a8a9;
    overflow: hidden;
}
.back-window {
    position: absolute;
    left: 1200px;
    right: 13px;
    top: 32px;
    height: 551px;
    border: 2px solid #55555c;
    border-radius: 8px 8px 0 0;
    background: #c9d3de;
}
.graph-window {
    position: absolute;
    left: 18px;
    top: 19px;
    padding: 0 12px 12px;
    border: 1px solid #4b4f57;
    border-radius: 8px 8px 0 0;
    background: linear-gradient(#c0cbda, #c6d6e4 20px, #dbe6f2 48px);
    box-shadow: inset 1px 1px #f4f8fc;
}
.graph-window__title {
    height: 47px;
    display: flex;
    align-items: center;
    padding-top: 8px;
}
.graph-window__title h2 {
    flex: 1;
    font-size: 21px;
    color: #222;
    padding-left: 308px;
}
.graph-window__icon {
    width: 24px;
    height: 24px;
    margin-left: 2px;
}
.graph-window__buttons {
    display: flex;
    gap: 4px;
    margin-right: 54px;
}
.graph-window__buttons button {
    width: 47px;
    height: 26px;
    border: 1px solid #7a8ea6;
    border-radius: 3px;
    background: #c9d8e6;
    box-shadow: inset 0 0 0 1px #e4edf5;
    display: flex;
    align-items: center;
    justify-content: center;
}
.glyph-min {
    width: 16px;
    height: 7px;
    margin-top: 3px;
    border: 1px solid #444c58;
    border-radius: 2px;
    background: #fff;
}
.glyph-max {
    width: 16px;
    height: 13px;
    border: 2px solid #444c58;
    border-radius: 2px;
}
.graph-window__page {
    border: 2px solid #7c8087;
    border-width: 2px 1px 1px 2px;
    padding-bottom: 45px;
    background: #bebdbe;
}
.chart {
    display: block;
    width: 879px;
    height: 671px;
    background: #fdfdfd;
    font-family: "Liberation Sans", Arial, sans-serif;
    font-size: 20px;
}
.layer-no {
    font-weight: bold;
    text-anchor: middle;
    font-family: "Open Sans", sans-serif;
}
.axis {
    fill: none;
    stroke: #000;
    stroke-width: 1.5;
}
.tick-label {
    text-anchor: end;
}
.cat-label, .axis-title {
    text-anchor: middle;
}
.axis-title {
    font-size: 24px;
}
.box {
    stroke: currentColor;
    stroke-width: 1.5;
}
.box .hollow {
    fill: #fff;
}
.box--100 {
    color: #c40a18;
    fill: #f27c06;
}
.box--300 {
    color: #35f045;
    fill: #0a9208;
}
.box--500 {
    color: #0808a8;
    fill: #000080;
}

/* plot details dialog */
.dialog {
    position: absolute;
    left: 831px;
    right: 18px;
    top: 56px;
    padding: 0 11px 11px;
    border: 1px solid #3f7fa3;
    background: #5a9cc2;
    font-family: "Liberation Sans", Arial, sans-serif;
}
.dialog__title {
    height: 44px;
    display: flex;
    align-items: center;
    padding-left: 3px;
    white-space: nowrap;
}
.dialog__icon {
    width: 23px;
    height: 18px;
}
.dialog__title h2 {
    flex: 1;
    padding-left: 260px;
    font-family: "Open Sans", sans-serif;
    font-size: 21px;
    color: #1d4c66;
}
.dialog__help {
    width: 40px;
    align-self: flex-start;
    border: 0;
    background: none;
    font: bold 20px "Open Sans", sans-serif;
    color: #12384c;
}
.dialog__close {
    width: 68px;
    height: 30px;
    align-self: flex-start;
    border: 0;
    background: #c23a50;
    margin-right: -3px;
}
.dialog__close svg {
    width: 12px;
    height: 12px;
}
.dialog__body {
    background: #f0eff1;
    padding: 18px 23px 11px 20px;
}
.tabs {
    display: flex;
    align-items: flex-end;
}
.tab {
    height: 28px;
    margin-left: -1px;
    margin-bottom: -1px;
    border: 1px solid #9c9ca0;
    background: linear-gradient(#f4f3f5, #e6e6e8);
    text-align: left;
    padding-left: 8px;
    width: 68px;
}
.tab--pattern {
    padding-left: 6px;
}
.tab--active {
    width: 69px;
    height: 31px;
    margin-left: 0;
    padding: 0 0 3px 10px;
    border-bottom-color: #fdfdfd;
    background: #fdfdfd;
    position: relative;
}
.tab--spacing {
    width: 77px;
}
.tab--box {
    width: 64px;
}
.tab--percentile {
    width: 90px;
}
.tab--lines {
    width: 60px;
}
.panel {
    border: 1px solid #a9a9ad;
    background: #fdfdfd;
    padding: 9px 17px 76px;
    line-height: 20px;
}
.panel__top {
    display: flex;
}
.panel__left {
    width: 386px;
    flex: none;
}
fieldset {
    margin: 0;
    border: 1px solid #d9d9dc;
    min-width: 0;
}
legend {
    padding: 0 4px;
    line-height: 20px;
}
.edit-mode {
    width: 254px;
    display: flex;
    gap: 18px;
    padding: 4px 7px 4px 7px;
}
.radio {
    display: flex;
    align-items: center;
    gap: 4px;
    height: 24px;
    white-space: nowrap;
}
.radio input {
    appearance: none;
    flex: none;
    width: 20px;
    height: 20px;
    margin: 0;
    border: 1px solid #666;
    border-radius: 50%;
    background: #fff;
}
.radio input:checked {
    background: radial-gradient(circle, #1c1c1c 5px, #fff 6px);
}
.hint {
    margin-top: 11px;
    white-space: nowrap;
}
.increments {
    width: 390px;
    margin: 9px 0 0 4px;
    border: 1px solid #77777b;
    background: #fff;
    padding: 0 4px 3px 0;
}
.increments__inner {
    border: solid #808080;
    border-width: 3px 0 0 3px;
    background: #808080;
    padding-bottom: 109px;
}
.increments table {
    width: 100%;
    border-collapse: collapse;
    table-layout: fixed;
    background: #fdfdfd;
}
.increments .c1 {
    width: 101px;
}
.increments .c2 {
    width: 90px;
}
.increments th {
    height: 37px;
    padding: 0 5px;
    font-weight: normal;
    text-align: left;
    background: #eeeeef;
    border: 1px solid #9a9a9e;
    border-width: 0 0 1px 1px;
}
.increments th:first-child {
    border-left: 0;
}
.increments td {
    height: 36px;
    padding: 0 0 0 4px;
    border-bottom: 1px solid #ededf0;
    border-right: 1px solid #ededf0;
    white-space: nowrap;
}
.increments td + td {
    padding: 0 1px 0 2px;
}
.drop {
    position: relative;
}
.drop select {
    appearance: none;
    width: 100%;
    height: 31px;
    border: 0;
    padding: 0;
    background: none;
}
.drop svg {
    position: absolute;
    right: 0;
    top: 0;
    width: 22px;
    height: 31px;
    padding: 9px 4px;
    border: 1px solid #7eb0de;
    background: #e2effb;
    pointer-events: none;
}
.detail {
    display: flex;
    align-items: center;
    justify-content: space-between;
    height: 35px;
    padding: 0 3px 0 1px;
}
.detail--focus {
    outline: 1px dotted #000;
    outline-offset: -1px;
}
.swatches {
    width: 158px;
    height: 27px;
}
.detail button {
    width: 19px;
    height: 28px;
    border: 1px solid #a4a4a8;
    background: #e6e6e6;
    font-size: 14px;
    line-height: 20px;
}
.panel__right {
    padding-top: 4px;
}
.panel__right h3 {
    font-size: 16px;
    line-height: 20px;
}
.members {
    width: 218px;
    height: 372px;
    margin: 11px 0 0 28px;
    border: 1px solid #85858a;
    padding: 4px 3px 3px 6px;
    display: grid;
    grid-template-columns: 185px 22px;
    grid-template-rows: 341px 23px;
}
.members ul {
    list-style: none;
    overflow: hidden;
    padding-top: 2px;
    display: flex;
    flex-direction: column;
    gap: 8px;
}
.members li {
    flex: none;
    display: flex;
    align-items: center;
    height: 40px;
}
.members li span {
    margin-left: 33px;
}
.chip {
    width: 90px;
    height: 40px;
    border: 2px solid #c21a08;
    background: #f07c08;
    flex: none;
}
.chip--300 {
    border-color: #2fea3c;
    background: #0a9208;
}
.chip--500 {
    border-color: #0000a0;
    background: #000078;
}
.vbar {
    background: #efeff0;
    display: flex;
    flex-direction: column;
    align-items: center;
}
.vbar svg, .hbar svg {
    flex: none;
    width: 12px;
    height: 10px;
    margin: 7px 5px 6px;
    color: #555;
}
.vbar span {
    width: 22px;
    height: 185px;
    background: #c9c9ca;
}
.vbar .down {
    margin-top: auto;
    margin-bottom: 8px;
}
.vbar .up {
    transform: rotate(180deg);
}
.hbar {
    grid-column: 1 / 3;
    margin-left: -4px;
    background: #efeff0;
    display: flex;
    align-items: center;
}
.hbar span {
    width: 111px;
    height: 22px;
    background: #c9c9ca;
    margin: 0 28px 0 3px;
}
.hbar .left {
    transform: rotate(90deg);
}
.hbar .right {
    transform: rotate(-90deg);
}
.subgrouping {
    width: 628px;
    margin: 5px 0 0 4px;
    padding: 20px 20px 14px 21px;
}
.subgrouping legend {
    margin-left: -12px;
}
.radios {
    display: grid;
}
.radios--enable {
    grid-template-columns: 122px 135px auto;
    margin: 14px 0 12px;
}
.radios--inc {
    grid-template-columns: 132px 187px auto;
    margin-top: 13px;
}
.column-label {
    display: flex;
    margin-bottom: 9px;
}
.column-label label {
    width: 149px;
    padding-top: 3px;
}
.drop--region {
    width: 162px;
}
.drop--region select {
    height: 30px;
    border: 1px solid #a2a2a6;
    background: linear-gradient(#eeeeef, #e2e2e3);
    padding: 0 5px;
}
.drop--region svg {
    border: 0;
    background: none;
    color: #444;
}
.actions {
    display: flex;
    gap: 18px;
    padding-top: 11px;
}
.btn {
    width: 81px;
    height: 34px;
    border: 1px solid #a4a4a8;
    background: linear-gradient(#f0f0f1, #e3e3e4);
}
.btn--fold {
    width: 40px;
}
.btn--workbook {
    width: 108px;
}
.btn:disabled {
    color: #98989c;
    border-color: #d2d2d5;
    background: #efeff0;
}

/* overlay mark */
.watermark {
    position: absolute;
    left: 1406px;
    right: 0;
    top: 38px;
    display: flex;
    gap: 4px;
    overflow: hidden;
    white-space: nowrap;
    pointer-events: none;
    color: #0a0a0a;
}
.watermark__hex {
    position: relative;
    flex: none;
    width: 116px;
    height: 132px;
    display: flex;
    flex-direction: column;
    align-items: center;
    padding-top: 32px;
    font: 22px "Noto Sans CJK SC", sans-serif;
    line-height: 33px;
}
.watermark__hex svg {
    position: absolute;
    left: 0;
    top: 0;
    width: 116px;
    height: 132px;
}
.watermark__hex strong {
    font-weight: 500;
}
.watermark__text {
    padding-top: 30px;
    font-family: "Liberation Serif", "Noto Sans CJK SC", serif;
}
.watermark__text strong {
    display: block;
    font-weight: 500;
    font-size: 22px;
    line-height: 34px;
}
.watermark__text span {
    display: block;
    padding: 4px 0 0 54px;
    font-size: 16px;
    line-height: 28px;
}
```
